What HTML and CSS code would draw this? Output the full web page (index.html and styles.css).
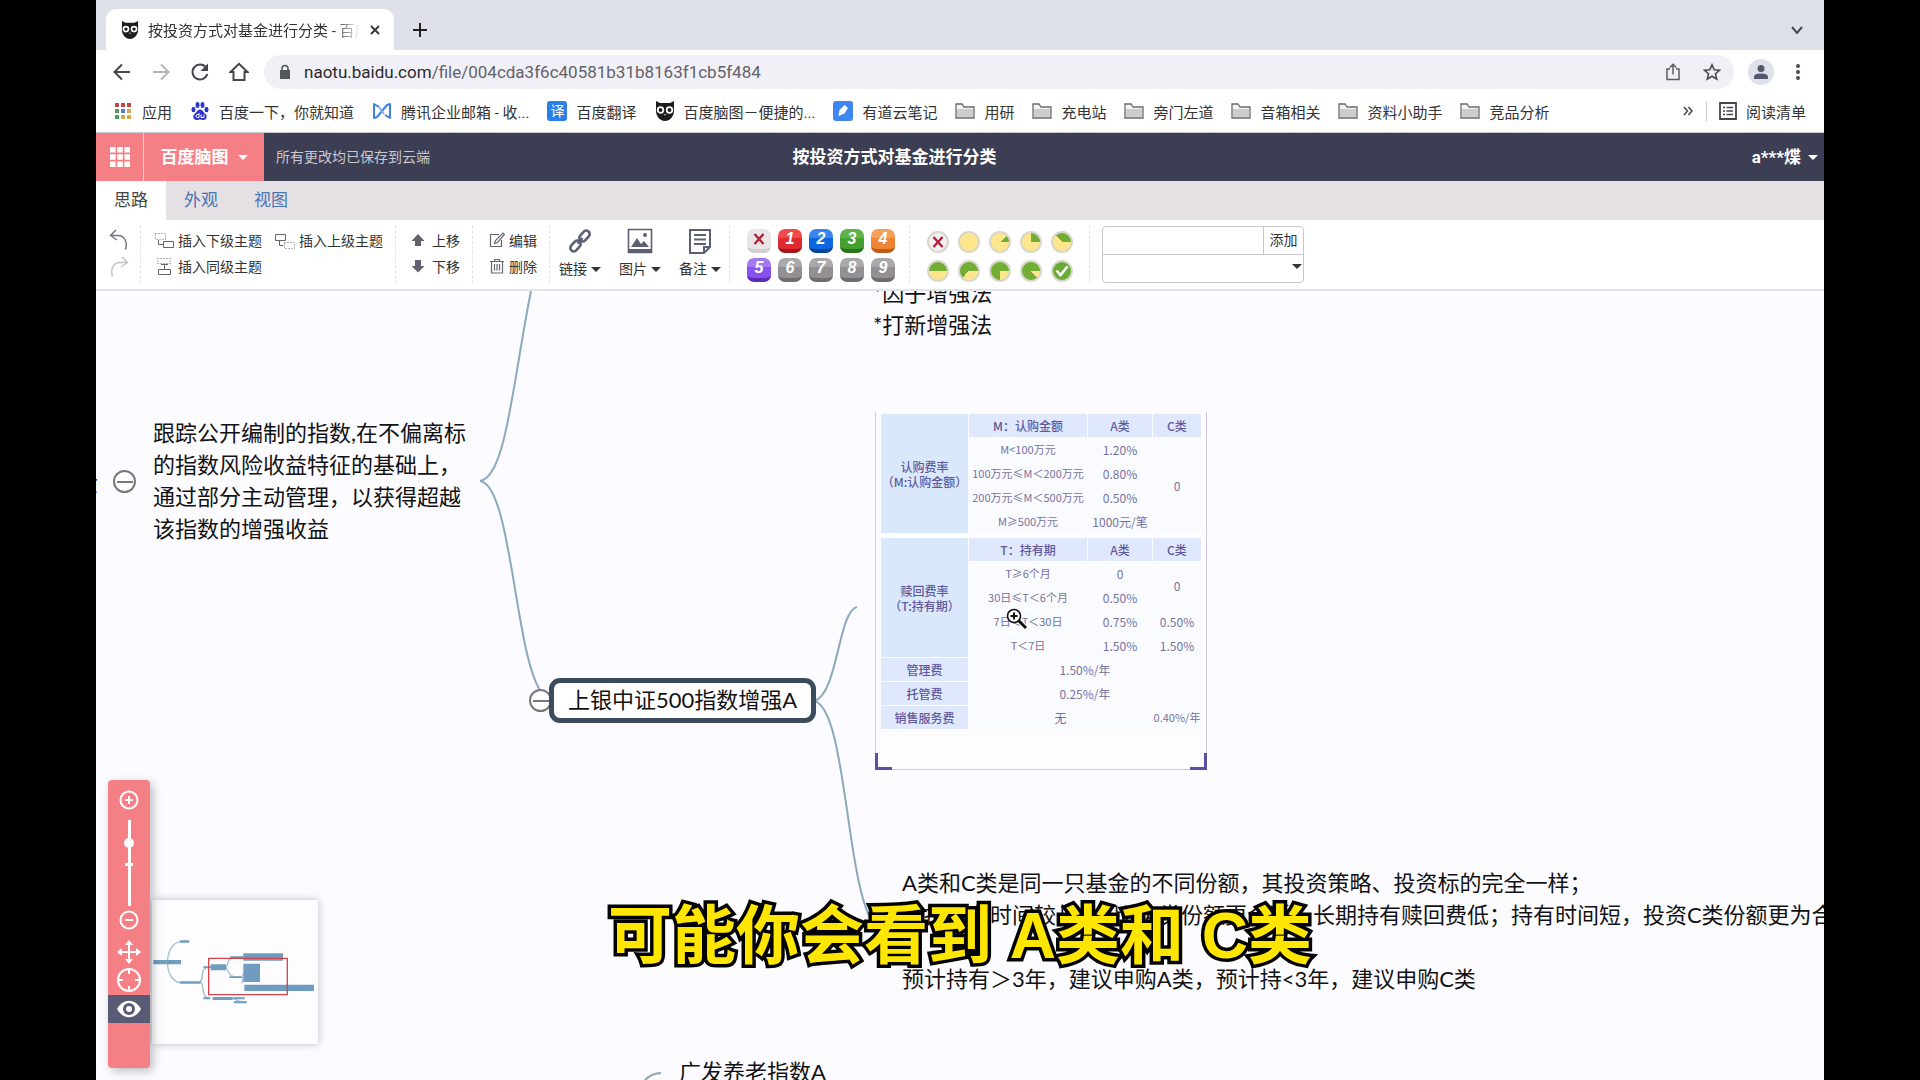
FILE: index.html
```html
<!DOCTYPE html>
<html lang="zh-CN">
<head>
    <meta charset="UTF-8">
    <title>按投资方式对基金进行分类 - 百度脑图</title>
    <link rel="stylesheet" href="styles.css">
</head>
<body>

<svg class="defs" width="0" height="0">
    <symbol id="owl" viewBox="0 0 20 20">
        <path d="M1 0l4 2h10l4-2v10c0 5-4 10-9 10s-9-5-9-10z" fill="#1d1d1f"/>
        <circle cx="5.500" cy="9" r="2.800" fill="#1d1d1f" stroke="#fff" stroke-width="1.800"/>
        <circle cx="14.500" cy="9" r="2.800" fill="#1d1d1f" stroke="#fff" stroke-width="1.800"/>
        <path d="M8.500 13l1.500 2 1.500-2z" fill="#999"/>
    </symbol>
    <symbol id="folder" viewBox="0 0 20 20">
        <path d="M1 17V3h6l2 3h10v11z" fill="#f4f4f4" stroke="#6a6a6a" stroke-width="1.3"/>
        <path d="M2 8h16v8H2z" fill="#cdcdcd"/>
    </symbol>
</svg>

<div id="window">
    <div class="tabstrip">
        <div class="tab">
            <svg width="18" height="20"><use href="#owl"/></svg>
            <span class="tab_title">按投资方式对基金进行分类 - 百度脑图</span>
            <button class="icon_btn" aria-label="关闭标签页">
                <svg width="12" height="12" viewBox="0 0 12 12"><path d="M2 2l8 8M10 2l-8 8" stroke="#333" stroke-width="1.8"/></svg>
            </button>
        </div>
        <button class="icon_btn new_tab" aria-label="新标签页">
            <svg width="14" height="14" viewBox="0 0 14 14"><path d="M7 0v14M0 7h14" stroke="#222" stroke-width="2"/></svg>
        </button>
        <button class="icon_btn tab_search" aria-label="搜索标签页">
            <svg width="14" height="14" viewBox="0 0 14 14"><path d="M2 4l5 6 5-6" fill="none" stroke="#44464f" stroke-width="2"/></svg>
        </button>
    </div>

    <div class="navbar">
        <button class="icon_btn" aria-label="后退">
            <svg width="20" height="20" viewBox="0 0 20 20"><path d="M18 10H3M10 2.500l-7.500 7.500 7.500 7.500" fill="none" stroke="#44464c" stroke-width="2"/></svg>
        </button>
        <button class="icon_btn" aria-label="前进">
            <svg width="20" height="20" viewBox="0 0 20 20"><path d="M2 10h15M10 2.500l7.500 7.500-7.500 7.500" fill="none" stroke="#b4b4b8" stroke-width="2"/></svg>
        </button>
        <button class="icon_btn" aria-label="重新加载">
            <svg width="20" height="20" viewBox="0 0 20 20"><path d="M16 5.500A7.500 7.500 0 1 0 17.300 12" fill="none" stroke="#44464c" stroke-width="2"/><path d="M18 1.500v7.500h-7.500z" fill="#44464c"/></svg>
        </button>
        <button class="icon_btn" aria-label="主页">
            <svg width="20" height="20" viewBox="0 0 20 20"><path d="M1.500 10L10 1.800l8.500 8.200H15.500v8h-11v-8z" fill="none" stroke="#44464c" stroke-width="2"/></svg>
        </button>
        <div class="address">
            <svg width="12" height="16" viewBox="0 0 12 16"><path d="M1 6h10v9H1z" fill="#55575e"/><path d="M3 7V4.500a3 3 0 0 1 6 0V7" fill="none" stroke="#55575e" stroke-width="1.600"/></svg>
            <p class="url">naotu.baidu.com<span>/file/004cda3f6c40581b31b8163f1cb5f484</span></p>
            <button class="icon_btn" aria-label="分享">
                <svg width="18" height="18" viewBox="0 0 18 18"><path d="M6 6H3v10.500h12V6h-3M9 11.500V1.500M5.800 4.500L9 1.300l3.200 3.200" fill="none" stroke="#5c5c64" stroke-width="1.500"/></svg>
            </button>
            <button class="icon_btn" aria-label="收藏">
                <svg width="18" height="18" viewBox="0 0 18 18"><path d="M9 1.800l2.200 4.900 5.300.5-4 3.500 1.200 5.300L9 13.200 4.300 16l1.200-5.300-4-3.500 5.300-.5z" fill="none" stroke="#4c4c55" stroke-width="1.600"/></svg>
            </button>
        </div>
        <button class="icon_btn avatar" aria-label="用户">
            <svg width="16" height="16" viewBox="0 0 16 16" fill="#55586c"><circle cx="8" cy="4.500" r="3.500"/><path d="M1 15v-2c0-3 4-3.500 7-3.500s7 .5 7 3.500v2z"/></svg>
        </button>
        <button class="icon_btn" aria-label="菜单">
            <svg width="6" height="18" viewBox="0 0 6 18" fill="#4c4c55"><circle cx="3" cy="3" r="2"/><circle cx="3" cy="9" r="2"/><circle cx="3" cy="15" r="2"/></svg>
        </button>
    </div>

    <nav class="bookmarks">
        <a href="#">
            <svg width="20" height="20" viewBox="0 0 20 20"><path d="M2 2h4v4H2zM8 2h4v4H8zM14 2h4v4h-4z" fill="#c5434b"/><path d="M2 8h4v4H2z" fill="#4b9b5c"/><path d="M8 8h4v4H8z" fill="#4b86d6"/><path d="M14 8h4v4h-4zM14 14h4v4h-4zM8 14h4v4H8z" fill="#d8a64a"/><path d="M2 14h4v4H2z" fill="#4b9b5c"/></svg>
            应用
        </a>
        <a href="#">
            <svg width="20" height="20" viewBox="0 0 20 20" fill="#2e32cf"><ellipse cx="3.500" cy="8.500" rx="2" ry="2.700"/><ellipse cx="7.500" cy="4" rx="2" ry="2.900"/><ellipse cx="12.500" cy="4" rx="2" ry="2.900"/><ellipse cx="16.500" cy="8.500" rx="2" ry="2.700"/><path d="M10 8.500c2.500 0 3.500 3 5.500 4.500s1.500 6-2 6c-1.500 0-2-.5-3.500-.5s-2 .5-3.500.5c-3.500 0-4-4.500-2-6S7.500 8.500 10 8.500z"/><path d="M9 12v4.500H7.500a1.500 1.500 0 0 1 0-3H9M11 13.500v3h3v-3" fill="none" stroke="#fff"/></svg>
            百度一下，你就知道
        </a>
        <a href="#">
            <svg width="20" height="20" viewBox="0 0 20 20" fill="none" stroke-width="2" stroke-linejoin="round"><path d="M7 6L2 3v14l3-1 10-12 3-1v14l-5-3" stroke="#3f82e8"/><path d="M7 6l5 7" stroke="#7db2f5"/></svg>
            腾讯企业邮箱 - 收...
        </a>
        <a href="#"><span class="yi">译</span>百度翻译</a>
        <a href="#"><svg width="20" height="20"><use href="#owl"/></svg>百度脑图－便捷的...</a>
        <a href="#">
            <svg width="20" height="20" viewBox="0 0 20 20"><rect width="20" height="20" rx="3" fill="#3f86f0"/><path d="M5.500 15l1-6 5-5 3.500 3-3.500 5.500z" fill="#fff"/></svg>
            有道云笔记
        </a>
        <a href="#"><svg width="20" height="20"><use href="#folder"/></svg>用研</a>
        <a href="#"><svg width="20" height="20"><use href="#folder"/></svg>充电站</a>
        <a href="#"><svg width="20" height="20"><use href="#folder"/></svg>旁门左道</a>
        <a href="#"><svg width="20" height="20"><use href="#folder"/></svg>音箱相关</a>
        <a href="#"><svg width="20" height="20"><use href="#folder"/></svg>资料小助手</a>
        <a href="#"><svg width="20" height="20"><use href="#folder"/></svg>竞品分析</a>
        <button class="icon_btn more" aria-label="更多书签">
            <svg width="12" height="12" viewBox="0 0 12 12"><path d="M2 2l3.500 4L2 10M6.500 2L10 6l-3.500 4" fill="none" stroke="#44464c" stroke-width="1.500"/></svg>
        </button>
        <a href="#" class="reading">
            <svg width="18" height="18" viewBox="0 0 18 18"><path d="M1 1h16v16H1z" fill="none" stroke="#44464c" stroke-width="1.800"/><path d="M4 5.500h2M4 9h2M4 12.500h2M7.500 5.500H14M7.500 9H14M7.500 12.500H14" stroke="#44464c" stroke-width="1.600"/></svg>
            阅读清单
        </a>
    </nav>

    <header>
        <button class="grid_btn" aria-label="全部应用">
            <svg width="20" height="20" viewBox="0 0 20 20"><path d="M0 0h5.600v5.600H0zM7.200 0h5.600v5.600H7.200zM14.400 0H20v5.600h-5.600zM0 7.200h5.600v5.600H0zM7.200 7.200h5.600v5.600H7.200zM14.400 7.200H20v5.600h-5.600zM0 14.400h5.600V20H0zM7.200 14.400h5.600V20H7.200zM14.400 14.400H20V20h-5.600z" fill="#fff"/></svg>
        </button>
        <button class="brand">百度脑图<i class="caret"></i></button>
        <span class="saved">所有更改均已保存到云端</span>
        <h1>按投资方式对基金进行分类</h1>
        <button class="user">a***煠<i class="caret"></i></button>
    </header>

    <div class="menu_tabs">
        <a href="#" class="aktiv">思路</a>
        <a href="#">外观</a>
        <a href="#">视图</a>
    </div>

    <div class="ribbon">
        <div class="group history">
            <button aria-label="撤销">
                <svg width="22" height="22" viewBox="0 0 20 22"><path d="M7 1L1.500 6.500 8 11M2 6.500h7c6 0 10 6 7.500 14" fill="none" stroke="#77777f" stroke-width="1.500"/></svg>
            </button>
            <button aria-label="重做">
                <svg width="22" height="22" viewBox="0 0 20 22"><path d="M13 1l5.500 5.500L12 11M18 6.500h-7C5 6.500 1 12.500 3.500 20.500" fill="none" stroke="#c4c4c8" stroke-width="1.500"/></svg>
            </button>
        </div>
        <div class="group insert">
            <button>
                <svg width="20" height="20" viewBox="0 0 20 20" fill="none" stroke="#66666e"><path d="M1.500 3.500h10v6h-10z" stroke-dasharray="1 2"/><path d="M4.500 10v4.500h5M9.500 11.500h10v6h-10z"/></svg>
                插入下级主题
            </button>
            <button>
                <svg width="20" height="20" viewBox="0 0 20 20" fill="none" stroke="#66666e"><path d="M.5 4.500h10v6H.5zM4.500 11v4.500h4"/><path d="M9.500 12.500h10v6h-10z" stroke-dasharray="1 2"/></svg>
                插入上级主题
            </button>
            <button>
                <svg width="20" height="20" viewBox="0 0 20 20" fill="none" stroke="#66666e"><path d="M3.500 2.500h13v5h-13z" stroke-dasharray="1 2"/><path d="M10.500 8v5M7 8.500h7M4.500 13.500h12v5h-12z"/></svg>
                插入同级主题
            </button>
        </div>
        <div class="group move">
            <button><svg width="14" height="14" viewBox="0 0 14 14"><path d="M7 1l6.500 7H10v5H4V8H.5z" fill="#62626f"/></svg>上移</button>
            <button><svg width="14" height="14" viewBox="0 0 14 14"><path d="M7 13.500L.5 7H4V1h6v6h3.500z" fill="#62626f"/></svg>下移</button>
        </div>
        <div class="group edit">
            <button><svg width="16" height="16" viewBox="0 0 16 16" fill="none" stroke="#66666e" stroke-width="1.200"><path d="M10 2.500H1.500v12h11V8"/><path d="M5.500 11.500l1-3L14 1l1.500 1.500-7 8z"/></svg>编辑</button>
            <button><svg width="16" height="16" viewBox="0 0 16 16" fill="none" stroke="#66666e" stroke-width="1.200"><path d="M1 3.500h14M5.500 3.500v-2h5v2M2.500 3.500V15h11V3.500M5.500 6v6.500M8 6v6.500M10.500 6v6.500"/></svg>删除</button>
        </div>
        <div class="group big">
            <button>
                <svg width="26" height="26" viewBox="0 0 26 26" fill="none" stroke="#5d5f74" stroke-width="2.600"><rect x="-6" y="-3.500" width="12" height="7" rx="3.500" transform="translate(17.500 8) rotate(-48)"/><rect x="-6" y="-3.500" width="12" height="7" rx="3.500" transform="translate(8.500 18) rotate(-48)"/><path d="M10.500 15.500l5-5.500"/></svg>
                <span>链接<i class="caret"></i></span>
            </button>
            <button>
                <svg width="26" height="26" viewBox="0 0 26 26"><path d="M1.500 1.500h23v23h-23z" fill="#fff" stroke="#5d5f74" stroke-width="1.600"/><path d="M1 21h24v4H1zM4 19l6-9 4 6 3-3 5 6z" fill="#5d5f74"/><circle cx="18" cy="7" r="2" fill="#5d5f74"/></svg>
                <span>图片<i class="caret"></i></span>
            </button>
            <button>
                <svg width="26" height="26" viewBox="0 0 26 26" fill="none" stroke="#5d5f74" stroke-width="2"><path d="M3 2h20v17l-6 6H3z"/><path d="M23 19h-6v6M7 7h12M7 11.500h12M7 16h12"/></svg>
                <span>备注<i class="caret"></i></span>
            </button>
        </div>
        <div class="group priority">
            <button class="p0" aria-label="移除优先级"><svg width="12" height="12" viewBox="0 0 12 12"><path d="M1.500 1l9 10M10.500 1l-9 10" stroke="#b3213a" stroke-width="2.400"/></svg></button>
            <button class="p1">1</button>
            <button class="p2">2</button>
            <button class="p3">3</button>
            <button class="p4">4</button>
            <button class="p5">5</button>
            <button>6</button>
            <button>7</button>
            <button>8</button>
            <button>9</button>
        </div>
        <div class="group progress">
            <button class="none" aria-label="移除进度"><svg width="12" height="12" viewBox="0 0 12 12"><path d="M1.500 1l9 10M10.500 1l-9 10" stroke="#b3213a" stroke-width="2.400"/></svg></button>
            <button aria-label="未开始"></button>
            <button class="g1" aria-label="完成 1/8"></button>
            <button class="g2" aria-label="完成 1/4"></button>
            <button class="g3" aria-label="完成 3/8"></button>
            <button class="g4" aria-label="完成一半"></button>
            <button class="g5" aria-label="完成 5/8"></button>
            <button class="g6" aria-label="完成 3/4"></button>
            <button class="g7" aria-label="完成 7/8"></button>
            <button class="g8" aria-label="已完成"><svg width="14" height="12" viewBox="0 0 14 12"><path d="M1.500 5.500l4 4.500 7-8.500" fill="none" stroke="#fff" stroke-width="2.600"/></svg></button>
        </div>
        <div class="resource">
            <div class="resource_add">
                <input type="text" aria-label="资源标签">
                <button>添加</button>
            </div>
            <button class="resource_list" aria-label="资源列表"><i class="caret"></i></button>
        </div>
    </div>

    <main>
        <svg class="lines" fill="none" stroke="#8aa9bb" stroke-width="2">
            <path d="M384 190C410 187 417 89 435 0"/>
            <path d="M384 190C416 194 419 369 446 402"/>
            <path d="M718 410C742 404 742 320 761 316"/>
            <path d="M718 410C750 416 750 589 776 630"/>
            <path d="M544 796Q552 782 565 782"/>
        </svg>

        <p class="node parent">金</p>
        <button class="expander e1" aria-label="收起"></button>
        <p class="node intro">跟踪公开编制的指数,在不偏离标<br>的指数风险收益特征的基础上，<br>通过部分主动管理，以获得超越<br>该指数的增强收益</p>
        <p class="node methods">*因子增强法<br>*打新增强法</p>
        <button class="expander e2" aria-label="收起"></button>
        <p class="node selected">上银中证500指数增强A</p>
        <p class="node compare">A类和C类是同一只基金的不同份额，其投资策略、投资标的完全一样；<br>若投持有时间较长，投资A类份额更合适，长期持有赎回费低；持有时间短，投资C类份额更为合适<br><br>预计持有＞3年，建议申购A类，预计持&lt;3年，建议申购C类</p>
        <p class="node pension">广发养老指数A</p>

        <div class="fee_card">
            <table>
                <tbody>
                    <tr><th rowspan="5" class="side">认购费率<br>（M:认购金额）</th><th class="cond">M：认购金额</th><th class="fee_a">A类</th><th class="fee_c">C类</th></tr>
                    <tr><td class="small">M&lt;100万元</td><td>1.20%</td><td rowspan="4">0</td></tr>
                    <tr><td class="small">100万元≤M＜200万元</td><td>0.80%</td></tr>
                    <tr><td class="small">200万元≤M＜500万元</td><td>0.50%</td></tr>
                    <tr><td class="small">M≥500万元</td><td>1000元/笔</td></tr>
                </tbody>
                <tbody class="redeem">
                    <tr><th rowspan="5" class="side">赎回费率<br>（T:持有期）</th><th>T：持有期</th><th>A类</th><th>C类</th></tr>
                    <tr><td class="small">T≥6个月</td><td>0</td><td rowspan="2">0</td></tr>
                    <tr><td class="small">30日≤T＜6个月</td><td>0.50%</td></tr>
                    <tr><td class="small">7日≤T＜30日</td><td>0.75%</td><td>0.50%</td></tr>
                    <tr><td class="small">T＜7日</td><td>1.50%</td><td>1.50%</td></tr>
                </tbody>
                <tbody>
                    <tr><th>管理费</th><td colspan="3">1.50%/年</td></tr>
                    <tr><th>托管费</th><td colspan="3">0.25%/年</td></tr>
                    <tr><th>销售服务费</th><td colspan="2">无</td><td class="small">0.40%/年</td></tr>
                </tbody>
            </table>
        </div>

        <svg class="cursor" width="22" height="22" viewBox="0 0 22 22"><path d="M12 12l8 8" stroke="#fff" stroke-width="5"/><path d="M12 12l8 8" stroke="#111" stroke-width="3"/><circle cx="8" cy="8" r="6.500" fill="#fff" stroke="#111" stroke-width="1.600"/><path d="M8 4.500v7M4.500 8h7" stroke="#111" stroke-width="2"/></svg>

        <div class="minimap">
            <svg width="166" height="144" viewBox="186 390 498 432">
                <g fill="none" stroke="#a3c0cf" stroke-width="4">
                    <path d="M270 515C220 525 220 630 270 638M330 638C345 620 325 592 362 592M335 638C342 660 335 685 362 685M408 592C420 580 400 560 460 562M408 592C420 605 408 622 455 622M455 640C462 630 455 610 462 610M425 686C435 678 430 697 470 697"/>
                </g>
                <path d="M190 570h83v13h-83zM270 511h28v7h-28zM270 634h62v7h-62zM362 583h46v18h-46zM460 550h119v22H460zM460 581h50v55h-50zM463 644h209v19H463zM340 589h22v5h-22zM340 682h20v6h-20zM368 681h60v9h-60zM430 682h34v6h-34zM432 694h38v6h-38zM420 559h40v5h-40zM418 619h38v5h-38z" fill="#709dbf"/>
                <path d="M356 565h236v109H356z" fill="none" stroke="#d8434b" stroke-width="4"/>
            </svg>
        </div>

        <div class="zoombar">
            <button aria-label="放大"><svg width="20" height="20" viewBox="0 0 20 20" fill="none" stroke="#fff" stroke-width="2"><circle cx="10" cy="10" r="8.500"/><path d="M10 6v8M6 10h8"/></svg></button>
            <input type="range" min="0" max="100" value="76" aria-label="缩放">
            <button aria-label="缩小"><svg width="20" height="20" viewBox="0 0 20 20" fill="none" stroke="#fff" stroke-width="2"><circle cx="10" cy="10" r="8.500"/><path d="M6 10h8"/></svg></button>
            <button class="hand" aria-label="拖动"><svg width="24" height="24" viewBox="0 0 24 24"><path d="M12 3v18M3 12h18" stroke="#fff" stroke-width="2"/><path d="M12 0l4 5H8zM12 24l4-5H8zM0 12l5-4v8zM24 12l-5-4v8z" fill="#fff"/></svg></button>
            <button aria-label="定位"><svg width="24" height="24" viewBox="0 0 24 24" fill="none" stroke="#fff" stroke-width="2"><circle cx="12" cy="12" r="11"/><path d="M12 1v5M12 18v5M1 12h5M18 12h5"/></svg></button>
            <button class="eye" aria-label="导航器"><svg width="26" height="20" viewBox="0 0 26 20"><path d="M1 10c6-11 18-11 24 0-6 11-18 11-24 0z" fill="#fff"/><circle cx="13" cy="10" r="6" fill="#585b73"/><circle cx="13" cy="10" r="3" fill="#fff"/></svg></button>
        </div>
    </main>
</div>

<p class="subtitle">可能你会看到 A类和 C类</p>

</body>
</html>
```
FILE: styles.css
```css
* {
    box-sizing: border-box;
}

html, body {
    height: 100%;
    margin: 0;
    background: #000;
    font-family: Roboto, "Noto Sans CJK SC", sans-serif;
    color: #333;
}

body {
    padding: 0 5%;
    overflow: hidden;
}

p, h1 {
    margin: 0;
}

a {
    color: inherit;
    text-decoration: none;
}

button, input {
    font: inherit;
    color: inherit;
    background: none;
    border: 0;
    padding: 0;
    margin: 0;
}

svg {
    display: block;
    flex-shrink: 0;
}

.defs {
    position: absolute;
}

#window {
    display: flex;
    flex-direction: column;
    height: 100%;
    background: #fff;
}

.icon_btn {
    display: flex;
    align-items: center;
    justify-content: center;
}

.caret {
    display: inline-block;
    border: 5px solid transparent;
    border-top-color: currentColor;
    border-bottom: 0;
}

/* browser tabs */
.tabstrip {
    display: flex;
    align-items: center;
    height: 50px;
    padding: 0 20px 0 10px;
    background: #dfe1ea;
}

.tab {
    display: flex;
    align-items: center;
    align-self: flex-end;
    width: 288px;
    height: 41px;
    padding: 0 13px 0 15px;
    border-radius: 10px 10px 0 0;
    background: #fff;
    font-size: 15px;
}

.tab_title {
    flex: 1;
    margin: 0 9px;
    overflow: hidden;
    white-space: nowrap;
    -webkit-mask-image: linear-gradient(to right, #000 88%, transparent);
    mask-image: linear-gradient(to right, #000 88%, transparent);
}

.new_tab {
    margin: 9px 0 0 19px;
}

.tab_search {
    margin: 9px 0 0 auto;
}

/* address row */
.navbar {
    display: flex;
    align-items: center;
    gap: 19px;
    height: 44px;
    padding: 0 23px 0 16px;
}

.address {
    display: flex;
    flex: 1;
    align-items: center;
    gap: 21px;
    height: 34px;
    margin-left: -4px;
    padding: 0 13px 0 15px;
    border-radius: 17px;
    background: #f2f0f7;
}

.url {
    flex: 1;
    margin-left: -8px;
    font-size: 17px;
    color: #2a2a2e;
}

.url span {
    color: #62626a;
}

.avatar {
    width: 26px;
    height: 26px;
    margin: 0 2px 0 -5px;
    border-radius: 50%;
    background: #dfe1ea;
}

/* bookmarks */
.bookmarks {
    display: flex;
    align-items: center;
    gap: 18px;
    height: 39px;
    padding: 0 18px 4px 17px;
    border-bottom: 1px solid #c8c8d0;
    font-size: 15px;
    white-space: nowrap;
}

.bookmarks a {
    display: flex;
    align-items: center;
    gap: 9px;
}

.yi {
    width: 20px;
    height: 20px;
    border-radius: 3px;
    background: #2a7fe8;
    color: #fff;
    font-size: 14px;
    line-height: 20px;
    text-align: center;
}

.more {
    margin-left: auto;
    margin-right: -6px;
}

.bookmarks .reading {
    height: 20px;
    padding-left: 12px;
    border-left: 1px solid #c8c8d0;
}

/* naotu header */
header {
    display: grid;
    grid-template-columns: 48px 120px 7fr auto 10fr auto;
    align-items: center;
    height: 48px;
    background: #3c3e53;
    color: #fff;
    font-size: 17px;
    font-weight: bold;
    line-height: 22px;
}

.grid_btn, .brand {
    display: flex;
    align-items: center;
    justify-content: center;
    height: 48px;
    background: #f48085;
}

.grid_btn {
    border-right: 1px solid #fbd0d2;
}

.brand {
    gap: 9px;
}

.saved {
    padding-left: 12px;
    color: #c9c9d2;
    font-size: 14px;
    font-weight: normal;
}

header h1 {
    grid-column: 4;
    font-size: 17px;
}

.user {
    grid-column: 6;
    display: flex;
    align-items: center;
    gap: 7px;
    padding-right: 6px;
}

.menu_tabs {
    display: flex;
    height: 39px;
    background: #e4e0e4;
    font-size: 17px;
    line-height: 38px;
    color: #4a74b0;
}

.menu_tabs a {
    padding: 0 18px;
}

.menu_tabs .aktiv {
    background: #fff;
    color: #444;
}

/* ribbon */
.ribbon {
    display: flex;
    height: 71px;
    padding: 6px 0;
    border-bottom: 2px solid #e4e4e8;
    font-size: 14px;
    white-space: nowrap;
}

.group {
    display: grid;
    align-content: center;
    padding-bottom: 2px;
    border-right: 1px dashed #e2e2e6;
}

.group button {
    display: flex;
    align-items: center;
}

.history {
    width: 45px;
    gap: 5px;
    padding-left: 12px;
}

.insert {
    grid-template-columns: auto auto;
    gap: 6px 13px;
    width: 255px;
    padding-bottom: 4px;
    padding-left: 13px;
    justify-content: start;
}

.insert button {
    gap: 4px;
    height: 20px;
}

.move {
    width: 77px;
    gap: 6px;
    padding-bottom: 4px;
    padding-left: 15px;
}

.move button {
    gap: 7px;
    height: 20px;
}

.edit {
    width: 77px;
    gap: 6px;
    padding-bottom: 4px;
    padding-left: 16px;
}

.edit button {
    gap: 4px;
    height: 20px;
}

.big {
    grid-template-columns: 60px 60px 60px;
    width: 180px;
    padding-bottom: 0;
}

.group.big button {
    flex-direction: column;
    gap: 3px;
}

.big span {
    display: flex;
    align-items: center;
    gap: 4px;
    line-height: 24px;
}

.priority, .progress {
    grid-template-columns: repeat(5, 24px);
    gap: 5px 7px;
    width: 180px;
    padding-bottom: 0;
    padding-left: 17px;
}

.priority {
    padding-top: 2px;
}

.group.priority button {
    justify-content: center;
    width: 24px;
    height: 24px;
    border-radius: 7px;
    border-bottom: 4px solid #6f6d70;
    background: linear-gradient(#aaa8aa 45%, #929092 45%);
    color: #fff;
    font: italic bold 16px "Liberation Sans", sans-serif;
}

.group.priority .p0 {
    background: #eae6e8;
    border-color: #d2ced0;
}

.group.priority .p1 {
    background: linear-gradient(#ee4a4c 45%, #e02a30 45%);
    border-color: #a5151b;
}

.group.priority .p2 {
    background: linear-gradient(#3a86ee 45%, #0c68e0 45%);
    border-color: #0645a0;
}

.group.priority .p3 {
    background: linear-gradient(#5cb44a 45%, #45a030 45%);
    border-color: #28741a;
}

.group.priority .p4 {
    background: linear-gradient(#f5a058 45%, #f08436 45%);
    border-color: #c05e18;
}

.group.priority .p5 {
    background: linear-gradient(#a378f2 45%, #8850ee 45%);
    border-color: #5a2cb8;
}

.group.progress button {
    justify-content: center;
    width: 22px;
    height: 22px;
    border: 2px solid #d9d6cc;
    border-radius: 50%;
    background: #fde68b;
}

.progress {
    row-gap: 7px;
    padding-top: 3px;
}

.group.progress .none {
    background: #f2eef2;
}

.group.progress .g1 { background: conic-gradient(from 45deg, #72ae34 45deg, #fde68b 0) border-box; }
.group.progress .g2 { background: conic-gradient(#72ae34 90deg, #fde68b 0) border-box; }
.group.progress .g3 { background: conic-gradient(from -45deg, #72ae34 135deg, #fde68b 0) border-box; }
.group.progress .g4 { background: conic-gradient(from -90deg, #72ae34 180deg, #fde68b 0) border-box; }
.group.progress .g5 { background: conic-gradient(from -135deg, #72ae34 225deg, #fde68b 0) border-box; }
.group.progress .g6 { background: conic-gradient(from -180deg, #72ae34 270deg, #fde68b 0) border-box; }
.group.progress .g7 { background: conic-gradient(from -225deg, #72ae34 315deg, #fde68b 0) border-box; }
.group.progress .g8 { background: #68ab36; }

.resource {
    display: flex;
    flex-direction: column;
    width: 202px;
    margin-left: 12px;
    border: 1px solid #c8c8cc;
    border-radius: 4px;
}

.resource_add {
    display: flex;
    height: 28px;
    border-bottom: 1px solid #c8c8cc;
}

.resource_add input {
    flex: 1;
    min-width: 0;
    padding: 0 6px;
}

.resource_add button {
    width: 40px;
    padding-bottom: 4px;
    border-left: 1px solid #c8c8cc;
}

.resource_list {
    display: flex;
    flex: 1;
    align-items: center;
    justify-content: flex-end;
    padding: 0 1px 4px;
}

/* mind map, nodes are placed freely on the canvas */
main {
    position: relative;
    flex: 1;
    overflow: hidden;
    background: #fcfbff;
}

.lines {
    position: absolute;
    width: 100%;
    height: 100%;
}

.node {
    position: absolute;
    font: 22px/32px Lato, "Noto Sans CJK SC", sans-serif;
    color: #111;
    white-space: nowrap;
}

.parent {
    left: -20px;
    top: 176px;
    color: #1a1a8c;
}

.intro {
    left: 57px;
    top: 126px;
}

.methods {
    left: 777px;
    top: -14px;
}

.selected {
    left: 453px;
    top: 387px;
    padding: 1px 14px 2px;
    border: 5px solid #3b4c5e;
    border-radius: 11px;
    background: #fff;
}

.compare {
    left: 806px;
    top: 576px;
}

.pension {
    left: 583px;
    top: 765px;
}

.expander {
    position: absolute;
    width: 23px;
    height: 23px;
    border: 2px solid #77777c;
    border-radius: 50%;
    background: linear-gradient(#77777c, #77777c) center / 16px 2px no-repeat #fff;
}

.e1 {
    left: 17px;
    top: 179px;
}

.e2 {
    left: 433px;
    top: 398px;
}

.fee_card {
    position: absolute;
    left: 779px;
    top: 121px;
    width: 332px;
    height: 358px;
    padding: 1px 4px;
    border: 1px solid #cfc9e2;
    border-top: 0;
    background: #fdfdff;
}

/* corner marks */
.fee_card::before, .fee_card::after {
    content: "";
    position: absolute;
    bottom: -1px;
    width: 14px;
    height: 14px;
    border-bottom: 3px solid #5c50a4;
}

.fee_card::before {
    left: -1px;
    border-left: 3px solid #5c50a4;
}

.fee_card::after {
    right: -1px;
    border-right: 3px solid #5c50a4;
}

.fee_card table {
    width: 100%;
    table-layout: fixed;
    border-spacing: 1px;
    font: 12px/15px "Noto Sans CJK SC", sans-serif;
    text-align: center;
    white-space: nowrap;
    color: #77729c;
}

.fee_card th, .fee_card td {
    height: 23px;
    padding: 0;
}

.fee_card th {
    background: #dfe8fd;
    color: #5f599b;
    font-weight: 500;
}

.fee_card td {
    background: #fafbff;
}

.fee_card .side {
    width: 87px;
    background: #dae8fc;
}

.fee_a {
    width: 64px;
}

.fee_c {
    width: 48px;
}

.fee_card .small {
    font-size: 11px;
}

.redeem::before {
    content: "";
    display: table-row;
    height: 3px;
}

.cursor {
    position: absolute;
    left: 910px;
    top: 317px;
}

.minimap {
    position: absolute;
    left: 56px;
    bottom: 36px;
    background: #fdfcff;
    box-shadow: 0 0 8px rgba(0, 0, 0, 0.25);
}

.zoombar {
    position: absolute;
    left: 12px;
    bottom: 12px;
    display: flex;
    flex-direction: column;
    align-items: center;
    width: 42px;
    height: 288px;
    padding-top: 10px;
    border-radius: 4px;
    background: #f48085;
    box-shadow: 3px 3px 10px rgba(0, 0, 0, 0.25);
}

.zoombar button {
    display: flex;
    align-items: center;
    justify-content: center;
    width: 42px;
    height: 28px;
}

.zoombar button:first-child {
    height: 20px;
}

.zoombar .hand {
    margin-top: 4px;
}

/* zoom level, 100% is the small tick */
.zoombar input {
    -webkit-appearance: none;
    appearance: none;
    writing-mode: vertical-lr;
    direction: rtl;
    width: 12px;
    height: 86px;
    margin: 10px 0 0;
    background:
        linear-gradient(#fff, #fff) center / 3px 100% no-repeat,
        linear-gradient(#fff, #fff) 50% 43px / 8px 3px no-repeat;
}

.zoombar input::-webkit-slider-thumb {
    -webkit-appearance: none;
    width: 10px;
    height: 10px;
    border-radius: 50%;
    background: #fff;
}

.zoombar .eye {
    margin-top: 1px;
    background: #585b73;
}

/* video caption */
.subtitle {
    position: absolute;
    left: 0;
    right: 0;
    bottom: 96px;
    font: bold 64px/96px "Liberation Sans", "Noto Sans CJK SC", sans-serif;
    text-align: center;
    color: #ffe600;
    -webkit-text-stroke: 7px #000;
    paint-order: stroke fill;
    stroke-linejoin: round;
}
```
